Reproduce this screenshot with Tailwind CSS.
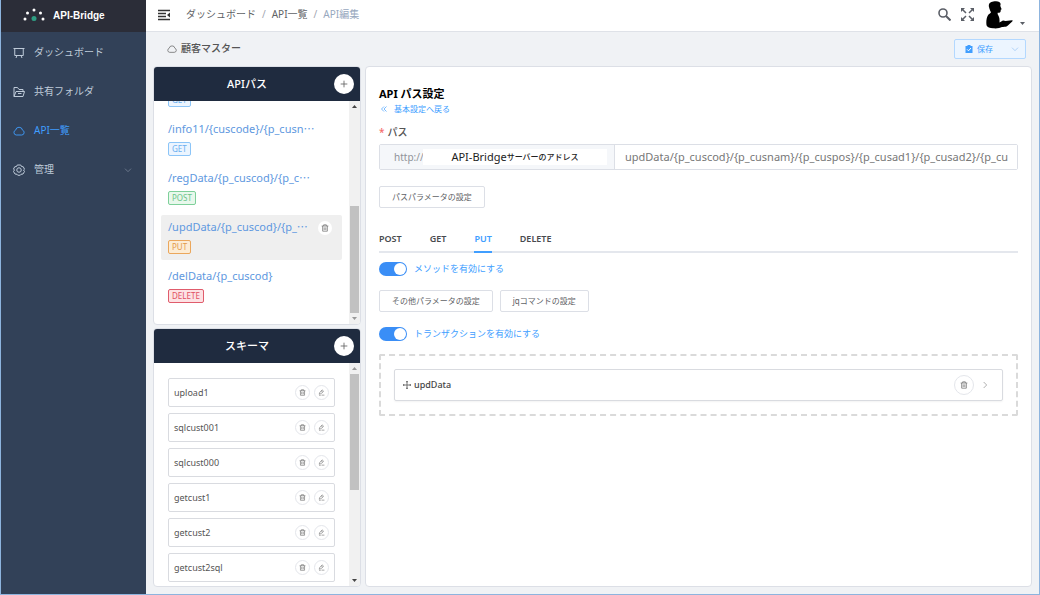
<!DOCTYPE html>
<html lang="ja">

<head>
  <meta charset="UTF-8">
  <meta name="viewport" content="width=device-width, initial-scale=1.0">
  <title>API-Bridge</title>
  <script src="https://cdn.jsdelivr.net/npm/@tailwindcss/browser@4"></script>
</head>

<body class="bg-[#f0f2f5] font-['Noto_Sans','Noto_Sans_CJK_JP',sans-serif] text-[10px] text-[#555]">

  <!-- Icons -->
  <svg class="hidden" aria-hidden="true">
    <symbol id="trash" viewBox="0 0 24 24" fill="none" stroke="currentColor" stroke-width="2.4">
      <path d="M2 6h20M8 6V2.500h8V6M5 6v15.500h14V6M9.500 10v8M14.500 10v8" />
    </symbol>
    <symbol id="edit" viewBox="0 0 24 24" fill="none" stroke="currentColor" stroke-width="2.200">
      <path d="M4 18l2-6 8-9 5 4-8 9-7 2zM11 7l5 4M4 22h5M12 21h10" />
    </symbol>
    <symbol id="cloud" viewBox="0 0 24 24" fill="none" stroke="currentColor" stroke-width="1.800">
      <path d="M6.500 20h11a5 5 0 0 0 1.500-9.700 7 7 0 0 0-13.800 0A5 5 0 0 0 6.500 20z" />
    </symbol>
    <symbol id="down" viewBox="0 0 24 24" fill="none" stroke="currentColor" stroke-width="2">
      <path d="M3 8l9 9 9-9" />
    </symbol>
    <symbol id="plus" viewBox="0 0 24 24" fill="none" stroke="currentColor" stroke-width="2.600">
      <path d="M12 2v20M2 12h20" />
    </symbol>
  </svg>

  <div class="flex h-screen border-x border-b border-[#8db4de]">

    <!-- Sidebar -->
    <aside class="flex w-[145px] shrink-0 flex-col bg-[#324158]">
      <a href="#" class="flex h-8 items-center gap-2 bg-[#2b2d38] pb-[2px] pl-[22px] font-['Liberation_Sans',sans-serif] text-[10px] font-bold text-white">
        <svg class="h-4 w-[22px]" viewBox="0 0 22 16" fill="#fff">
          <circle cx="2" cy="12" r="1.500" /><circle cx="4.500" cy="6" r="1.500" /><circle cx="11" cy="3" r="1.500" />
          <circle cx="17.500" cy="6" r="1.500" /><circle cx="20" cy="12" r="1.500" />
          <circle cx="11" cy="11.500" r="2.500" fill="#2f9e83" />
        </svg>
        API-Bridge
      </a>
      <nav class="flex flex-col pt-px text-[#bfcbd9]">
        <a href="#" class="flex h-[39px] items-center gap-[9px] pl-3">
          <svg class="size-3" viewBox="0 0 24 24" fill="none" stroke="currentColor" stroke-width="2"><path d="M1 3h22M3.500 3v14h17V3M8 17l-2 5M16 17l2 5" /></svg>
          ダッシュボード
        </a>
        <a href="#" class="flex h-[39px] items-center gap-[9px] pl-3">
          <svg class="size-3" viewBox="0 0 24 24" fill="none" stroke="currentColor" stroke-width="2"><path d="M2 21V3h7l3 4h8v4M2 21l4-10h17l-3 10zM10 15h7" /></svg>
          共有フォルダ
        </a>
        <a href="#" class="flex h-[39px] items-center gap-[9px] pl-3 text-[#409eff]">
          <svg class="size-3"><use href="#cloud" /></svg>
          API一覧
        </a>
        <a href="#" class="flex h-[39px] items-center gap-[9px] pr-[14px] pl-3">
          <svg class="size-3" viewBox="0 0 24 24" fill="none" stroke="currentColor" stroke-width="2"><path d="M8.500 2h7l1.500 3 3.500.500 2.500 5-2 1.500 2 3-3 5-4 .500-1.500 2h-5L8 20.500 4 20l-3-5 2-3-2-2 2.500-4.500L7 5z" /><circle cx="12" cy="12" r="4.500" /></svg>
          <span class="flex-1">管理</span>
          <svg class="size-2 text-[#8591a3]"><use href="#down" /></svg>
        </a>
      </nav>
    </aside>

    <div class="flex min-w-0 flex-1 flex-col">

      <!-- Top bar -->
      <header class="flex h-8 shrink-0 items-center border-b border-[#dfe2e8] bg-white pr-[14px] pb-[2px] pl-3">
        <button type="button" aria-label="メニュー" class="mr-4">
          <svg class="size-3 text-[#333]" viewBox="0 0 12 12" fill="none" stroke="currentColor"><path d="M0 1.500h12M0 4.500h8M0 7.500h8M0 10.500h12" stroke-width="1.300" /><path d="M12 3.500v5L9 6z" fill="currentColor" stroke="none" /></svg>
        </button>
        <nav class="flex gap-[6px] text-[#606266]">
          <a href="#">ダッシュボード</a><span class="text-[#a0a5b0]">/</span>
          <a href="#">API一覧</a><span class="text-[#a0a5b0]">/</span>
          <span class="text-[#97a8be]">API編集</span>
        </nav>
        <div class="ml-auto flex h-full items-center text-[#5a5e66]">
          <button type="button" aria-label="検索" class="mr-[10px]">
            <svg class="size-[13px]" viewBox="0 0 13 13" fill="none" stroke="currentColor" stroke-width="1.600"><circle cx="5" cy="5" r="4" /><path d="M8 8l4.500 4.500" stroke-width="2" /></svg>
          </button>
          <button type="button" aria-label="全画面" class="mr-3">
            <svg class="size-[13px]" viewBox="0 0 13 13" fill="currentColor" stroke="currentColor" stroke-width="1.500"><path d="M1.500 1.500l3.500 3.500M11.500 1.500L8 5M1.500 11.500L5 8M11.500 11.500L8 8" /><path d="M0 0h4L0 4zM13 0v4L9 0zM0 13V9l4 4zM13 13H9l4-4z" stroke="none" /></svg>
          </button>
          <button type="button" aria-label="ユーザー" class="flex items-end gap-[6px]">
            <svg class="h-7 w-7 text-black" viewBox="0 0 28 28" fill="currentColor"><path d="M3 6C2 2.500 5 .500 8.500.300 12-.200 14.500 1 14.700 3.200c-.700.700-.400 2 .300 3.600l.700 1.400-1 .500c.200 2.300-.500 3.300-3 3.100-.300 1 .200 1.800.800 3 1 2 1.200 4 1 6.700l3-1.800c1-.400 2 .200 3 .400l6.500-.800c1 0 .600.900 0 1.400-2 1.500-3.500 3.400-5.500 4.800-1.500.600-3 .200-4.500.600-2 1-5 1.500-9 1.200-3-.200-6-1-6.500-3-.500-3.500 0-7.500 1.500-10 .900-1.500 2.500-1.800 3-3C4 9.500 3.300 7.500 3 6z" /></svg>
            <svg class="mb-1 h-[3px] w-[5px]" viewBox="0 0 5 3" fill="currentColor"><path d="M0 0h5L2.500 3z" /></svg>
          </button>
        </div>
      </header>

      <!-- Title row -->
      <div class="flex h-[34px] shrink-0 items-center gap-1 pr-[13px] pb-px pl-[21px]">
        <svg class="size-[10px] text-[#666]"><use href="#cloud" /></svg>
        <h1 class="font-medium">顧客マスター</h1>
        <div class="ml-auto flex h-5 rounded-xs border border-[#b3d8ff] bg-[#ecf5ff] text-[8px] text-[#409eff]">
          <button type="button" class="flex items-center gap-1 pr-3 pl-[10px]">
            <svg class="size-2" viewBox="0 0 8 8"><path d="M.500 1h2V0h3v1h2v7h-7z" fill="currentColor" /><path d="M2 4.300l1.500 1.500L6 3" fill="none" stroke="#fff" /></svg>
            保存
          </button>
          <button type="button" aria-label="その他" class="px-[6px]"><svg class="size-2 text-[#8fc0f5]"><use href="#down" /></svg></button>
        </div>
      </div>

      <main class="flex min-h-0 flex-1 gap-1 pr-[7px] pb-[7px] pl-[7px]">

        <!-- Left column -->
        <div class="flex w-[208px] shrink-0 flex-col gap-[3px]">
          <section class="flex min-h-0 flex-1 flex-col overflow-hidden rounded-sm border border-[#dcdfe6] bg-white">
            <header class="flex h-[34px] shrink-0 items-center bg-[#1f2b3f] px-[6px]">
              <h2 class="flex-1 text-center text-[11px] font-medium text-white">APIパス</h2>
              <button type="button" aria-label="パスを追加" class="flex size-5 items-center justify-center rounded-full bg-white text-[#666]"><svg class="size-2"><use href="#plus" /></svg></button>
            </header>
            <div class="flex min-h-0 flex-1">
              <ul id="path-list" class="flex min-w-0 flex-1 flex-col justify-end gap-1 overflow-hidden pr-[7px] pb-[15px] pl-[7px]"></ul>
              <div class="flex w-[11px] flex-col items-center bg-[#f1f1f1] py-1">
                <svg class="h-[3px] w-[5px]" viewBox="0 0 5 3" fill="#444"><path d="M0 3h5L2.500 0z" /></svg>
                <div class="mt-auto mb-1 h-1/2 w-[9px] bg-[#c1c1c1]"></div>
                <svg class="h-[3px] w-[5px]" viewBox="0 0 5 3" fill="#999"><path d="M0 0h5L2.500 3z" /></svg>
              </div>
            </div>
          </section>

          <section class="flex min-h-0 flex-1 flex-col overflow-hidden rounded-sm border border-[#dcdfe6] bg-white">
            <header class="flex h-[34px] shrink-0 items-center bg-[#1f2b3f] px-[6px]">
              <h2 class="flex-1 text-center text-[11px] font-medium text-white">スキーマ</h2>
              <button type="button" aria-label="スキーマを追加" class="flex size-5 items-center justify-center rounded-full bg-white text-[#666]"><svg class="size-2"><use href="#plus" /></svg></button>
            </header>
            <div class="flex min-h-0 flex-1">
              <ul id="schema-list" class="flex min-w-0 flex-1 flex-col gap-[6px] overflow-hidden pt-[15px] pr-[14px] pl-[14px]"></ul>
              <div class="flex w-[11px] flex-col items-center bg-[#f1f1f1] py-1">
                <svg class="h-[3px] w-[5px]" viewBox="0 0 5 3" fill="#999"><path d="M0 3h5L2.500 0z" /></svg>
                <div class="mt-1 mb-auto h-[54%] w-[9px] bg-[#c1c1c1]"></div>
                <svg class="h-[3px] w-[5px]" viewBox="0 0 5 3" fill="#444"><path d="M0 0h5L2.500 3z" /></svg>
              </div>
            </div>
          </section>
        </div>

        <!-- Path settings -->
        <section class="flex min-w-0 flex-1 flex-col items-start rounded-sm border border-[#dcdfe6] bg-white px-[13px] pt-[19px]">
          <h2 class="text-[11px] leading-4 font-bold text-black">API パス設定</h2>
          <a href="#" class="flex h-[14px] items-center gap-[7px] pl-[2px] text-[8px] text-[#409eff]">
            <svg class="size-[6px]" viewBox="0 0 6 6" fill="none" stroke="currentColor" stroke-width=".700"><path d="M3 .500L.500 3 3 5.500M5.500 .500L3 3l2.500 2.500" /></svg>
            基本設定へ戻る
          </a>
          <label for="path" class="mt-2 flex gap-[3px] leading-4 font-medium"><span class="text-[#f56c6c]">*</span>パス</label>
          <div class="mt-1 flex h-[26px] w-full rounded-xs border border-[#dcdfe6]">
            <div class="flex w-[235px] shrink-0 items-center border-r border-[#dcdfe6] bg-[#f5f7fa] pr-[7px] pl-[14px] text-[#909399]">
              <span class="w-[29px] shrink-0">http://</span>
              <span class="flex h-4 flex-1 items-center justify-center bg-white text-[8px] font-medium text-[#222]"><span class="text-[11px] font-normal">API-Bridge</span>サーバーのアドレス</span>
            </div>
            <input id="path" type="text" value="updData/{p_cuscod}/{p_cusnam}/{p_cuspos}/{p_cusad1}/{p_cusad2}/{p_cu"
              class="ml-[10px] min-w-0 flex-1 bg-white text-[11px] text-[#777] outline-none" />
          </div>
          <button type="button" class="mt-4 h-[22px] rounded-xs border border-[#dcdfe6] px-3 text-[8px] text-[#606266]">パスパラメータの設定</button>

          <!-- Method tabs -->
          <div role="tablist" class="mt-[18px] flex h-[27px] w-full gap-7 border-b-2 border-[#e4e7ed] text-[9px] font-semibold text-[#484a4e]">
            <button type="button" role="tab">POST</button>
            <button type="button" role="tab">GET</button>
            <button type="button" role="tab" aria-selected="true" class="-mb-[2px] border-b-2 border-[#409eff] text-[#409eff]">PUT</button>
            <button type="button" role="tab">DELETE</button>
          </div>

          <label class="mt-2 flex items-center gap-[7px] text-[9px] leading-4 text-[#409eff]">
            <input type="checkbox" role="switch" checked class="h-[14px] w-7 appearance-none rounded-full bg-[#b9bdc6] p-px before:block before:size-3 before:rounded-full before:bg-white checked:bg-[#3a8ef6] checked:before:ml-auto">
            メソッドを有効にする
          </label>
          <div class="mt-[13px] flex gap-[7px] text-[8px] text-[#606266]">
            <button type="button" class="h-[22px] rounded-xs border border-[#dcdfe6] px-3">その他パラメータの設定</button>
            <button type="button" class="h-[22px] rounded-xs border border-[#dcdfe6] px-3">jqコマンドの設定</button>
          </div>
          <label class="mt-[14px] flex items-center gap-[7px] text-[9px] leading-4 text-[#409eff]">
            <input type="checkbox" role="switch" checked class="h-[14px] w-7 appearance-none rounded-full bg-[#b9bdc6] p-px before:block before:size-3 before:rounded-full before:bg-white checked:bg-[#3a8ef6] checked:before:ml-auto">
            トランザクションを有効にする
          </label>

          <div class="mt-3 w-full rounded-xs border-2 border-dashed border-[#dadada] px-[13px] py-[13px]">
            <div class="flex h-8 items-center rounded-xs border border-[#d9dbe0] px-2 shadow-xs">
              <svg class="mr-[3px] size-2 text-[#555]" viewBox="0 0 8 8" fill="none" stroke="currentColor" stroke-width=".800"><path d="M4 0v8M0 4h8M3 1.200L4 .300l1 .900M3 6.800l1 .900 1-.900M1.200 3L.300 4l.900 1M6.800 3l.900 1-.900 1" /></svg>
              <span class="flex-1 text-[9px] font-medium text-[#444]">updData</span>
              <button type="button" aria-label="削除" class="mr-[7px] flex size-5 items-center justify-center rounded-full border border-[#e4e6eb] text-[#777]"><svg class="size-2"><use href="#trash" /></svg></button>
              <button type="button" aria-label="開く" class="pr-[5px]"><svg class="size-2 -rotate-90 text-[#888]"><use href="#down" /></svg></button>
            </div>
          </div>
        </section>
      </main>
    </div>
  </div>

  <script>
    const paths = [
      { path: '', method: 'GET' },
      { path: '/info11/{cuscode}/{p_cusn⋯', method: 'GET' },
      { path: '/regData/{p_cuscod}/{p_c⋯', method: 'POST' },
      { path: '/updData/{p_cuscod}/{p_⋯', method: 'PUT', active: true },
      { path: '/delData/{p_cuscod}', method: 'DELETE' }
    ];
    const schemas = ['upload1', 'sqlcust001', 'sqlcust000', 'getcust1', 'getcust2', 'getcust2sql'];

    const tagColors = {
      GET: 'border-[#8cc5f8] bg-[#ecf5ff] text-[#6aaef0]',
      POST: 'border-[#7ed09a] bg-[#e8f8ec] text-[#6cc48a]',
      PUT: 'border-[#eba75c] bg-[#fcecd5] text-[#e39a4b]',
      DELETE: 'border-[#e05c6c] bg-[#fde2e4] text-[#e05062]'
    };

    document.getElementById('path-list').innerHTML = paths.map(item => `
      <li class="flex h-[45px] shrink-0 flex-col items-start rounded-xs pl-[7px] ${item.active ? 'bg-[#efefef]' : ''}">
        <div class="flex h-[25px] w-full items-center">
          <a href="#" class="flex-1 text-[11px] whitespace-nowrap text-[#6098e0]">${item.path}</a>
          ${item.active ? `<button type="button" aria-label="削除" class="mr-[10px] flex size-[14px] items-center justify-center rounded-full bg-white text-[#777]"><svg class="size-2"><use href="#trash" /></svg></button>` : ''}
        </div>
        <span class="flex h-[14px] items-center rounded-xs border px-[3px] text-[8px] ${tagColors[item.method]}">${item.method}</span>
      </li>`).join('');

    document.getElementById('schema-list').innerHTML = schemas.map(name => `
      <li class="flex h-[29px] shrink-0 items-center gap-1 rounded-xs border border-[#d9dbe0] px-[5px] text-[9px]">
        <span class="flex-1">${name}</span>
        <button type="button" aria-label="削除" class="flex size-[15px] items-center justify-center rounded-full border border-[#e4e6eb] text-[#777]"><svg class="size-[7px]"><use href="#trash" /></svg></button>
        <button type="button" aria-label="編集" class="flex size-[15px] items-center justify-center rounded-full border border-[#e4e6eb] text-[#777]"><svg class="size-[7px]"><use href="#edit" /></svg></button>
      </li>`).join('');
  </script>
</body>

</html>
